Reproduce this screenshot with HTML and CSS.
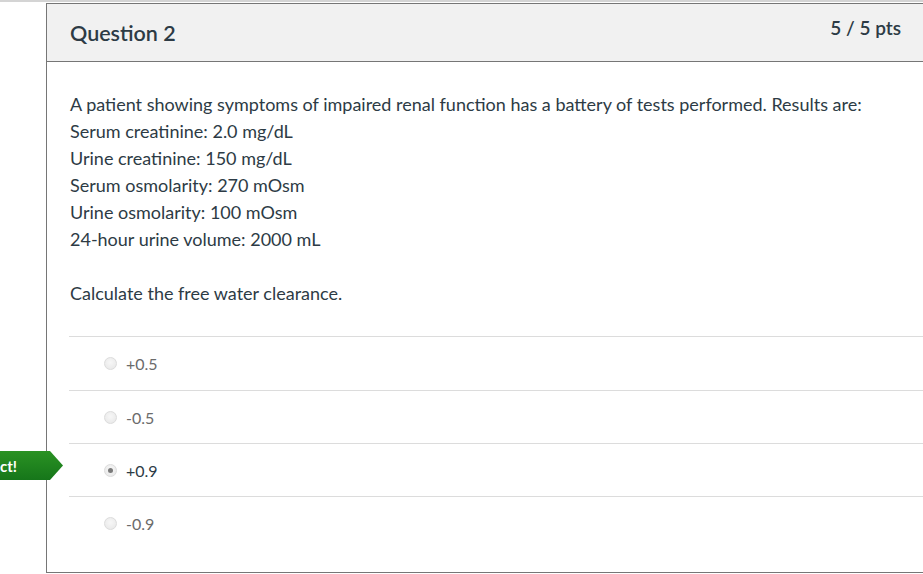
FILE: index.html
```html
<!DOCTYPE html>
<html>
<head>
<meta charset="utf-8">
<link rel="stylesheet" href="styles.css">
</head>
<body>
<div class="topline"></div>
<div class="card">
  <div class="card-header">
    <h2 class="q-title">Question 2</h2>
    <div class="q-pts">5 / 5 pts</div>
  </div>
  <div class="card-body">
    <div class="q-text">
      <p>A patient showing symptoms of impaired renal function has a battery of tests performed. Results are:<br>
      Serum creatinine: 2.0 mg/dL<br>
      Urine creatinine: 150 mg/dL<br>
      Serum osmolarity: 270 mOsm<br>
      Urine osmolarity: 100 mOsm<br>
      24-hour urine volume: 2000 mL</p>
      <p>Calculate the free water clearance.</p>
    </div>
    <div class="answers">
      <div class="answer"><span class="radio"></span><span class="label">+0.5</span></div>
      <div class="answer"><span class="radio"></span><span class="label">-0.5</span></div>
      <div class="answer selected"><span class="radio checked"></span><span class="label">+0.9</span>
        <div class="flag"><span>Correct!</span></div>
      </div>
      <div class="answer"><span class="radio"></span><span class="label">-0.9</span></div>
    </div>
  </div>
</div>
</body>
</html>
```

FILE: styles.css
```css
html, body {
  margin: 0;
  padding: 0;
  background: #fff;
  overflow: hidden;
  width: 923px;
  height: 574px;
}
body {
  font-family: Lato, "Liberation Sans", sans-serif;
  color: #2d3b45;
}
.topline {
  height: 2px;
  background: #d4d4d4;
}
.card {
  margin-left: 46px;
  margin-top: 1px;
  width: 900px;
  height: 570px;
  border: 1px solid #767676;
  border-right: none;
  box-sizing: border-box;
}
.card-header {
  height: 58px;
  box-sizing: border-box;
  background: #f1f1f1;
  border-bottom: 1px solid #767676;
  display: flex;
  justify-content: space-between;
  align-items: flex-start;
  padding: 0 0 0 23px;
  width: 877px;
}
.q-title {
  margin: 0;
  padding-top: 15px;
  font-size: 21.5px;
  font-weight: 600;
  line-height: 28px;
  color: #2d3b45;
}
.q-pts {
  padding-top: 11px;
  padding-right: 23px;
  font-size: 19px;
  font-weight: 600;
  line-height: 26px;
  color: #2d3b45;
}
.card-body {
  padding: 29px 0 0 23px;
}
.q-text p {
  margin: 0 0 27px 0;
  font-size: 18px;
  line-height: 27px;
  color: #2d3b45;
}
.q-text p:last-child {
  margin-bottom: 29px;
}
.answers {
  margin-left: -1px;
}
.answer {
  position: relative;
  border-top: 1px solid #dcdcdc;
  height: 53px;
  display: flex;
  align-items: center;
  padding-left: 35px;
  box-sizing: border-box;
}
.answer:first-child {
  height: 54px;
}
.radio {
  width: 13px;
  height: 13px;
  border-radius: 50%;
  box-sizing: border-box;
  border: 1px solid #dcdcdc;
  background: radial-gradient(circle at 50% 40%, #f7f7f7, #e6e6e6);
  position: relative;
}
.radio.checked::after {
  content: "";
  position: absolute;
  left: 3px;
  top: 3px;
  width: 5px;
  height: 5px;
  border-radius: 50%;
  background: #7a7a7a;
}
.label {
  margin-left: 9px;
  font-size: 16px;
  color: #6b6b6b;
}
.selected .label {
  color: #2d3b45;
}
.flag {
  position: absolute;
  left: -89px;
  top: 7px;
  width: 83px;
  height: 29px;
  clip-path: polygon(0 0, 70px 0, 83px 50%, 70px 100%, 0 100%);
  background: linear-gradient(#2a9223, #16761a);
  display: flex;
  align-items: center;
  justify-content: flex-end;
  padding-right: 46px;
  box-sizing: border-box;
}
.flag span {
  color: #fff;
  font-weight: 700;
  font-size: 15px;
  white-space: nowrap;
}
```
